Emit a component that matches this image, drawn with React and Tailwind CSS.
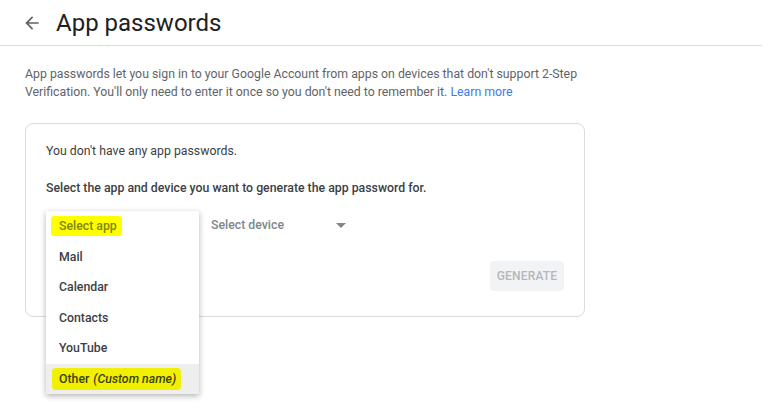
import { useState } from "react";

const items = ["Mail", "Calendar", "Contacts", "YouTube"];

const BackArrow = () => (
  <svg width="20" height="20" viewBox="0 0 24 24" fill="#5f6368">
    <path d="M20 11H7.83l5.59-5.59L12 4l-8 8 8 8 1.41-1.41L7.83 13H20v-2z" />
  </svg>
);

const App = () => {
  const [open] = useState(true);

  return (
    <div className="w-[768px] h-[412px] bg-white font-['Roboto',sans-serif] overflow-hidden">
      {/* Header */}
      <div className="w-[762px] h-[46px] border-b border-[#dadce0] flex items-center pl-[22px]">
        <BackArrow />
        <h1 className="ml-[14px] text-[24px] leading-none text-[#202124]">App passwords</h1>
      </div>

      {/* Intro */}
      <p className="mt-[19px] ml-[25px] w-[560px] text-[12.3px] leading-[18px] text-[#5f6368]">
        App passwords let you sign in to your Google Account from apps on devices that don't support 2-Step
        Verification. You'll only need to enter it once so you don't need to remember it.{" "}
        <a className="text-[#3b7ce6]">Learn more</a>
      </p>

      {/* Card */}
      <div className="relative mt-[22px] ml-[25px] w-[560px] h-[194px] border border-[#dadce0] rounded-lg px-[20px] pt-[18px]">
        <p className="text-[12.3px] leading-[18px] text-[#3c4043]">You don't have any app passwords.</p>
        <p className="mt-[19px] text-[12.3px] leading-[18px] font-medium text-[#3c4043]">
          Select the app and device you want to generate the app password for.
        </p>

        <div className="mt-[13px] h-[30px] flex items-center">
          <div className="w-[153px] pl-[13px] text-[12.3px] font-medium text-[#80868b]">Select app</div>
          <div className="ml-[12px] w-[140px] flex items-center justify-between text-[12.3px] font-medium text-[#80868b]">
            <span>Select device</span>
            <svg width="10" height="5" viewBox="0 0 10 5" className="mr-[5px]">
              <path d="M0 0h10L5 5z" fill="#80868b" />
            </svg>
          </div>
        </div>

        <div className="mt-[21px] flex justify-end">
          <button className="w-[74px] h-[30px] rounded bg-[#f1f3f4] text-[12px] font-medium tracking-[0.2px] text-[#b4b7bb]">
            GENERATE
          </button>
        </div>

        {/* Open app menu */}
        {open && (
          <div className="absolute left-[20px] top-[87px] w-[153px] bg-white shadow-[0_2px_6px_rgba(0,0,0,0.3)] z-10">
            <div className="h-[30.5px] flex items-center pl-[5px]">
              <span className="bg-[#ffff00] rounded-[3px] pl-[8px] pr-[5px] h-[20px] flex items-center text-[12.3px] font-medium text-[#80860b]">
                Select app
              </span>
            </div>
            {items.map((item) => (
              <div key={item} className="h-[30.5px] flex items-center pl-[13px] text-[12.3px] font-medium text-[#3c4043]">
                {item}
              </div>
            ))}
            <div className="h-[30.5px] flex items-center pl-[6px] bg-[#eeeeee]">
              <span className="bg-[#f0f000] rounded-[4px] pl-[7px] pr-[5px] h-[22px] flex items-center text-[12.3px] font-medium text-[#3c4000]">
                Other <i className="ml-[4px]">(Custom name)</i>
              </span>
            </div>
          </div>
        )}
      </div>
    </div>
  );
};

export default App;
